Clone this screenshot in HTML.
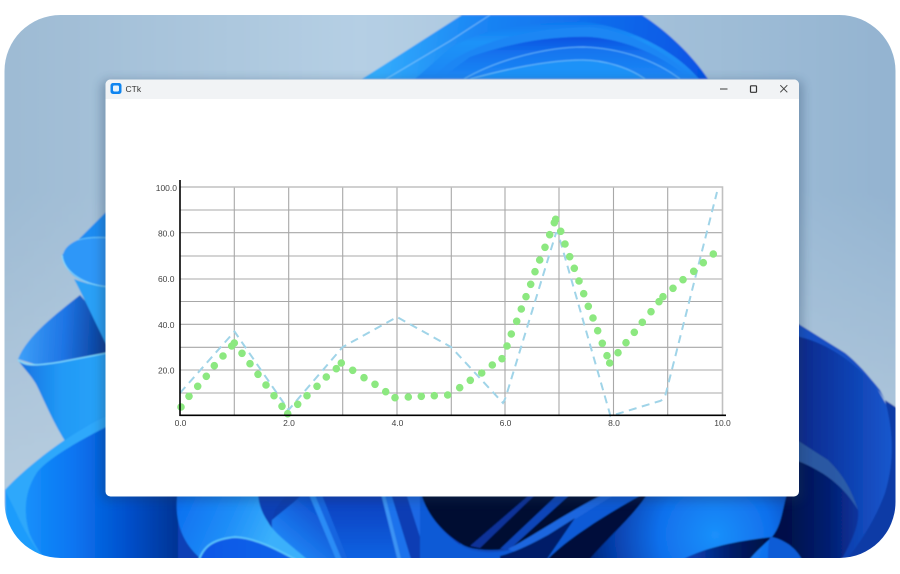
<!DOCTYPE html>
<html>
<head>
<meta charset="utf-8">
<style>
html,body{margin:0;padding:0;background:#fff;width:900px;height:574px;overflow:hidden}
svg{position:absolute;left:0;top:0}
text{font-family:"Liberation Sans",sans-serif}
</style>
</head>
<body>
<svg width="900" height="574" viewBox="0 0 900 574" xmlns="http://www.w3.org/2000/svg">
<defs>
<clipPath id="clip"><rect x="4.5" y="15" width="891" height="543" rx="56"/></clipPath>
<clipPath id="win"><rect x="105.5" y="79.5" width="693.5" height="417" rx="5"/></clipPath>
<filter id="soft" x="-5%" y="-5%" width="110%" height="110%"><feGaussianBlur stdDeviation=".7"/></filter>
<filter id="soft2" x="-5%" y="-5%" width="110%" height="110%"><feGaussianBlur stdDeviation=".3"/></filter>
<filter id="shadow" x="-10%" y="-10%" width="120%" height="120%"><feGaussianBlur stdDeviation="5"/></filter>
<linearGradient id="bg" x1="0" y1="0" x2="1" y2="0">
<stop offset="0" stop-color="#9dbad3"/><stop offset=".4" stop-color="#b5cfe4"/><stop offset=".7" stop-color="#a4c1da"/><stop offset="1" stop-color="#93b3d0"/>
</linearGradient>
<linearGradient id="bg2" x1="0" y1="0" x2="0" y2="1">
<stop offset="0" stop-color="#bcd0e1" stop-opacity="0"/><stop offset="1" stop-color="#bcd0e1"/>
</linearGradient>
<linearGradient id="top1" gradientUnits="userSpaceOnUse" x1="380" y1="40" x2="700" y2="79">
<stop offset="0" stop-color="#33acfc"/><stop offset=".3" stop-color="#1a85f4"/><stop offset="1" stop-color="#0655e4"/>
</linearGradient>
<linearGradient id="top2" gradientUnits="userSpaceOnUse" x1="0" y1="22" x2="0" y2="79">
<stop offset="0" stop-color="#0f78f0"/><stop offset=".35" stop-color="#1e92f8"/><stop offset="1" stop-color="#1a86f4"/>
</linearGradient>
<linearGradient id="top3" gradientUnits="userSpaceOnUse" x1="0" y1="36" x2="0" y2="79">
<stop offset="0" stop-color="#0650e0"/><stop offset=".4" stop-color="#1472ee"/><stop offset="1" stop-color="#1c88f6"/>
</linearGradient>
<linearGradient id="top4" gradientUnits="userSpaceOnUse" x1="0" y1="46" x2="0" y2="79">
<stop offset="0" stop-color="#1472ee"/><stop offset="1" stop-color="#1c88f6"/>
</linearGradient>
<linearGradient id="pB" gradientUnits="userSpaceOnUse" x1="20" y1="340" x2="108" y2="345">
<stop offset="0" stop-color="#3d9ff8"/><stop offset=".5" stop-color="#1e74e4"/><stop offset="1" stop-color="#07388f"/>
</linearGradient>
<linearGradient id="pC" gradientUnits="userSpaceOnUse" x1="25" y1="0" x2="105" y2="0">
<stop offset="0" stop-color="#1878e4"/><stop offset=".45" stop-color="#2199f6"/><stop offset="1" stop-color="#29a3f8"/>
</linearGradient>
<linearGradient id="big" gradientUnits="userSpaceOnUse" x1="25" y1="0" x2="182" y2="0">
<stop offset="0" stop-color="#1590fb"/><stop offset=".3" stop-color="#0a76f2"/><stop offset=".65" stop-color="#0150cc"/><stop offset="1" stop-color="#04318f"/>
</linearGradient>
<linearGradient id="petal" gradientUnits="userSpaceOnUse" x1="180" y1="500" x2="270" y2="540">
<stop offset="0" stop-color="#0d70f0"/><stop offset=".55" stop-color="#1f8ef8"/><stop offset="1" stop-color="#3ab0fb"/>
</linearGradient>
<linearGradient id="inner" gradientUnits="userSpaceOnUse" x1="205" y1="0" x2="290" y2="0">
<stop offset="0" stop-color="#0c58e6"/><stop offset="1" stop-color="#0f63ea"/>
</linearGradient>
<linearGradient id="panel" gradientUnits="userSpaceOnUse" x1="330" y1="497" x2="285" y2="550">
<stop offset="0" stop-color="#0a44c8"/><stop offset="1" stop-color="#2088f8"/>
</linearGradient>
<linearGradient id="panel2" gradientUnits="userSpaceOnUse" x1="0" y1="497" x2="0" y2="558">
<stop offset="0" stop-color="#0a3fbe"/><stop offset="1" stop-color="#1162e2"/>
</linearGradient>
<radialGradient id="bright" gradientUnits="userSpaceOnUse" cx="715" cy="535" r="125">
<stop offset="0" stop-color="#1a90fb"/><stop offset=".45" stop-color="#1070ec"/><stop offset=".85" stop-color="#053aa4"/><stop offset="1" stop-color="#032a80"/>
</radialGradient>
<linearGradient id="sweep" gradientUnits="userSpaceOnUse" x1="680" y1="0" x2="770" y2="0">
<stop offset="0" stop-color="#0a48c4"/><stop offset=".6" stop-color="#021c66"/><stop offset="1" stop-color="#010f42"/>
</linearGradient>
<linearGradient id="right" gradientUnits="userSpaceOnUse" x1="800" y1="0" x2="890" y2="0">
<stop offset="0" stop-color="#07298c"/><stop offset=".5" stop-color="#0d3fae"/><stop offset="1" stop-color="#1856cc"/>
</linearGradient>
<linearGradient id="rdark" gradientUnits="userSpaceOnUse" x1="785" y1="0" x2="860" y2="0">
<stop offset="0" stop-color="#010f48"/><stop offset=".6" stop-color="#041f72"/><stop offset="1" stop-color="#0a35a0"/>
</linearGradient>
<linearGradient id="base" gradientUnits="userSpaceOnUse" x1="440" y1="0" x2="640" y2="0">
<stop offset="0" stop-color="#0d5ad6"/><stop offset=".45" stop-color="#0a3eaa"/><stop offset=".7" stop-color="#01093a"/><stop offset="1" stop-color="#01093a"/>
</linearGradient>
</defs>

<g clip-path="url(#clip)">
<g filter="url(#soft)">
<rect x="0" y="0" width="900" height="574" fill="url(#bg)"/>
<rect x="0" y="190" width="900" height="384" fill="url(#bg2)"/>

<!-- top bloom -->
<path d="M362 79 L462 15 L642 15 C668 32 692 55 708 79 Z" fill="url(#top1)"/>
<path d="M386 79 L450 41 L490 15" fill="none" stroke="#a8e0ff" stroke-width=".7" opacity=".8"/>
<path d="M422 79 L450 62 C470 50 495 34 520 27" fill="none" stroke="#a8e0ff" stroke-width=".6" opacity=".7"/>
<path d="M415 79 L450 48 C475 33 515 22 583 22 C625 25 675 50 699 79 Z" fill="url(#top2)"/>
<path d="M450 62 C480 42 525 28 590 27 C630 30 670 55 695 79 L430 79 Z" fill="#1a86f4"/>
<path d="M440 79 L470 57 C510 43 550 36 590 37 C630 40 665 58 690 79 Z" fill="url(#top3)"/>
<path d="M464 79 C500 58 550 47 583 47 C620 48 655 60 680 79 Z" fill="url(#top4)"/>
<path d="M464 79 C500 58 550 47 583 47 C620 48 655 60 680 79" fill="none" stroke="#6cc0fc" stroke-width=".8"/>
<path d="M470 79 C510 68 550 60 583 60 C605 60 630 68 645 79 Z" fill="#1f92f8"/>
<path d="M470 79 C510 68 550 60 583 60 C605 60 630 68 645 79" fill="none" stroke="#74c8fc" stroke-width=".8"/>

<!-- left petals -->
<path d="M110 208 L78 240 L62 255 L110 290 Z" fill="#1f8cf2"/>
<path d="M80 295 C55 315 28 335 18 359 L60 372 L112 356 L112 345 C100 322 92 308 80 295 Z" fill="url(#pB)"/>
<path d="M74 279 C90 285 100 286 112 287 L112 356 L105 342 C95 322 85 300 74 279 Z" fill="#2aa0f6"/>
<path d="M78 240 C88 237 100 237 112 238 L112 287 C92 286 70 280 64 262 C60 252 68 244 78 240 Z" fill="#2d97f8"/>
<path d="M78 240 C88 237 100 237 112 238" fill="none" stroke="#6dccfb" stroke-width=".9"/>
<path d="M62 255 C64 272 84 286 112 287" fill="none" stroke="#86e0ff" stroke-width="1"/>
<path d="M18 360 C24 368 40 366 60 362 L112 352 L112 425 L65 441 C52 420 44 400 36 384 C30 374 24 369 18 360 Z" fill="url(#pC)"/>
<path d="M18 360 C26 367 42 365 60 362 L112 352" fill="none" stroke="#7fdcff" stroke-width="1.2"/>

<!-- big bottom left -->
<path d="M5 490 C25 468 70 432 112 413 L190 413 L190 574 L5 574 Z" fill="url(#big)"/>
<path d="M5 490 C25 468 70 432 112 413 L112 424 C80 440 45 460 36 474 C26 490 22 510 30 535 C38 552 48 565 60 574 L5 574 Z" fill="#2ea8fb"/>
<path d="M16 512 C24 530 36 552 54 570 L10 570 L5 490 Z" fill="#1a9cfc"/>

<!-- bottom middle -->
<rect x="440" y="490" width="370" height="84" fill="url(#base)"/>
<path d="M178 490 H460 V574 H178 Z" fill="#0a3fb6"/>
<path d="M275 510 L290 490 L310 490 C298 500 284 512 272 522 Z" fill="#0a3cae"/>
<path d="M272 520 C290 505 300 498 306 490 L307 490 L337 562 L300 562 C280 545 270 535 272 520 Z" fill="url(#panel)"/>
<path d="M307 490 L337 562 L343 562 L313 490 Z" fill="#2b8cf6"/>
<path d="M313 490 L343 562 L349 562 L320 490 Z" fill="#1565e0"/>
<path d="M320 490 L349 562 L398 562 L380 490 Z" fill="url(#panel2)"/>
<path d="M380 490 L398 562 L402 562 L384 490 Z" fill="#3a93f5"/>
<path d="M384 490 L402 562 L412 562 L390 490 Z" fill="#1a72ec"/>
<path d="M390 490 L412 562 L428 562 L405 490 Z" fill="#0a3db4"/>
<path d="M405 490 L428 562 L460 562 L440 540 C428 525 422 510 420 490 Z" fill="#1a68e4"/>
<path d="M178 490 C173 520 182 545 205 562 L310 562 C295 548 275 535 268 522 C260 510 258 500 258 490 Z" fill="url(#petal)"/>
<path d="M199 562 C204 545 215 539 235 537 C255 538 275 550 302 562 Z" fill="url(#inner)"/>
<path d="M199 560 C204 545 215 539 235 537 C255 538 275 548 300 562" fill="none" stroke="#5ac6fc" stroke-width="1.8"/>

<!-- dark centre with streaks -->
<path d="M420 490 C425 510 438 530 463 547 C475 553 490 553 505 551 C525 547 540 535 585 505 L612 490 L660 490 L600 574 L420 574 Z" fill="#0d5ad6"/>
<path d="M420 490 C425 510 438 530 463 545 C472 550 490 551 505 549 C525 545 540 533 585 503 L612 490 Z" fill="#010a32"/>
<path d="M470 546 L535 490 L540 490 L480 548 Z" fill="#0c3298"/>
<path d="M500 549 L555 497 L565 490 L575 490 L510 549 Z" fill="#0f45b8"/>
<path d="M508 549 C535 535 570 510 612 490 L622 490 C585 512 545 540 515 552 Z" fill="#1b66de"/>
<path d="M545 562 C565 540 605 515 650 490 L670 490 L595 562 Z" fill="#01093a"/>
<path d="M500 556 C515 552 530 545 548 535 L575 518 L545 562 L500 562 Z" fill="#031b68"/>

<!-- lower right sweep -->
<path d="M587 562 C610 535 635 515 650 490 L790 490 L790 537 L803 562 Z" fill="url(#bright)"/>
<path d="M678 562 C705 546 745 540 772 537 C760 548 752 555 748 562 Z" fill="url(#sweep)"/>

<!-- right -->
<path d="M790 318 L800 325 L845 353 C860 365 870 378 878 390 C885 402 890 412 900 425 L900 574 L803 574 C797 548 785 540 772 537 C782 525 782 510 788 490 Z" fill="url(#right)"/>
<path d="M885 400 C893 430 895 460 885 493 C875 520 862 540 845 562 L900 562 L900 410 Z" fill="#0b3ba6"/>
<path d="M790 330 L800 337 C835 345 870 375 885 400 L880 390 C870 378 860 365 845 353 L800 325 Z" fill="#1450c4"/>
<path d="M790 436 L800 442 L828 460 C840 472 850 485 858 510 C860 525 850 545 840 562 L803 562 C797 548 785 540 772 537 C782 525 782 510 788 490 Z" fill="url(#rdark)"/>
<path d="M790 436 L800 442 L828 460 C840 472 850 485 858 510 C845 488 825 470 790 458 Z" fill="#3568b0" opacity=".8"/>
<path d="M770 537 C785 540 797 548 803 562 L768 562 C768 552 768 545 770 537 Z" fill="#0c5cd6"/>
</g>
</g>

<!-- window -->
<rect x="101" y="80" width="702" height="421" rx="7" fill="#1b3a5c" opacity=".3" filter="url(#shadow)"/>
<g clip-path="url(#win)">
<rect x="105" y="79" width="695" height="418" fill="#ffffff"/>
<rect x="105" y="79" width="695" height="20" fill="#f1f3f5"/>
</g>
<rect x="110.5" y="83" width="11" height="11" rx="2.5" fill="#0f85f0"/>
<rect x="113" y="85.5" width="6" height="6" rx="1.2" fill="#e6f2fb"/>
<text x="125.5" y="92" font-size="8.5" fill="#333">CTk</text>
<path d="M720 89 H727.5" stroke="#666" stroke-width="1.3" fill="none"/>
<rect x="750.5" y="85.8" width="6" height="6.5" rx=".8" fill="none" stroke="#333" stroke-width="1.2"/>
<path d="M780.3 85.2 L787.3 92.3 M787.3 85.2 L780.3 92.3" stroke="#444" stroke-width="1" fill="none"/>

<g filter="url(#soft2)">
<!-- grid -->
<g stroke="#a8a8a8" stroke-width="1.1" fill="none">
<path d="M180 210H722M180 232.7H722M180 256H722M180 279H722M180 301.5H722M180 324.3H722M180 347.3H722M180 370H722M180 393H722"/>
<path d="M234.3 187V415M288.7 187V415M342.7 187V415M397 187V415M451.3 187V415M505 187V415M559 187V415M613.5 187V415M667.7 187V415"/>
</g>
<path d="M180 187H722.5V415" fill="none" stroke="#c0c0c0" stroke-width="1.6"/>

<!-- dashed series -->
<path d="M180 393 L234.5 331.5 L288.5 410 L342.7 347 L397 317 L451 347 L503 403 C505 400 506 396 507 393 L556 233 L558 233 L610.5 416 L660 401 C663 400 665 397 666 393 L717 192" fill="none" stroke="#a0d4e8" stroke-width="2" stroke-dasharray="8 5.5"/>

<!-- dotted series -->
<path d="M181 407h0M189 396.3h0M197.7 386.3h0M206.3 376.3h0M214.3 365.7h0M223 356h0M231.7 346h0M234.3 343h0M242 353.3h0M250 363.7h0M258 374.3h0M266 385h0M274 395.7h0M282 406.3h0M287.7 413.7h0M297.7 404.3h0M307 395.7h0M317 386.3h0M326.3 377h0M336.3 368.7h0M341.3 363h0M352.7 370.3h0M364 377.7h0M375 384.3h0M385.7 391.7h0M395 397.7h0M408.3 397h0M421.3 396.3h0M434.3 395.7h0M447.7 395h0M459.7 387.7h0M470.3 380.3h0M481.7 373h0M492.3 365h0M502 358.7h0M507 346h0M511.3 334h0M516.7 321.3h0M521.3 309h0M526 296.7h0M530.7 284.3h0M535 271.7h0M539.7 260h0M545 247.3h0M549.7 234.7h0M554.3 222.7h0M555.7 219.3h0M560.7 231.3h0M565 244h0M569.7 256.7h0M574.3 268.3h0M579 281h0M583.7 293.7h0M588.3 306.3h0M593 318h0M597.7 330.7h0M602.3 343.3h0M607 355.7h0M609.7 363h0M618 352.7h0M626 342.7h0M634.3 332.3h0M642.3 322.3h0M651 311.7h0M659 301.7h0M663 296.7h0M673 288.3h0M683 279.7h0M693.7 271.3h0M703.3 262.7h0M713.3 254h0" fill="none" stroke="#8ce880" stroke-width="7.6" stroke-linecap="round"/>

<!-- axes -->
<path d="M180 180V416" stroke="#000" stroke-width="1.6" fill="none"/>
<path d="M179.5 415.3H726" stroke="#000" stroke-width="1.6" fill="none"/>

<!-- labels -->
<g font-size="8.5" fill="#444" text-anchor="end">
<text x="177" y="191">100.0</text>
<text x="174.5" y="236.5">80.0</text>
<text x="174.5" y="282">60.0</text>
<text x="174.5" y="328">40.0</text>
<text x="174.5" y="373.5">20.0</text>
</g>
<g font-size="8.5" fill="#444" text-anchor="middle">
<text x="180.5" y="426">0.0</text>
<text x="289" y="426">2.0</text>
<text x="397.5" y="426">4.0</text>
<text x="505.5" y="426">6.0</text>
<text x="614" y="426">8.0</text>
<text x="722.5" y="426">10.0</text>
</g>
</g>
</svg>
</body>
</html>
